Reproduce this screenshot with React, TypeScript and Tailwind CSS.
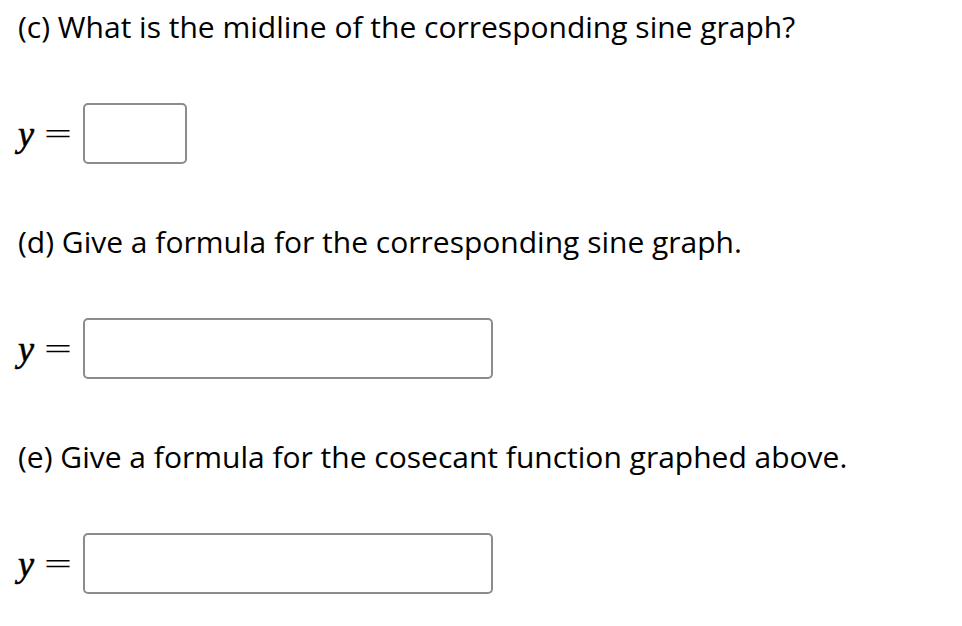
const questions = [
  { label: "(c) What is the midline of the corresponding sine graph?", boxWidth: "w-[104px]" },
  { label: "(d) Give a formula for the corresponding sine graph.", boxWidth: "w-[410px]" },
  { label: "(e) Give a formula for the cosecant function graphed above.", boxWidth: "w-[410px]" },
];

function Answer({ boxWidth }: { boxWidth: string }) {
  return (
    <div className="flex items-center">
      <span className="flex w-[65px] shrink-0 items-center font-['Liberation_Serif',serif] leading-none text-black">
        <span className="text-[36px] italic [-webkit-text-stroke:0.6px_black]">y</span>
        <span className="ml-[10px] inline-block origin-left scale-x-[1.65] text-[30px]">=</span>
      </span>
      <input
        type="text"
        className={`${boxWidth} h-[61px] rounded-[5px] border-2 border-[#8c8c8c] bg-white outline-none`}
      />
    </div>
  );
}

export default function App() {
  return (
    <div className="min-h-[626px] w-[962px] bg-white pl-[18px] font-['Open_Sans',sans-serif] text-black">
      {questions.map((q, i) => (
        <section key={i} className="flex h-[215px] flex-col pt-[7px]">
          <p className="text-[30px] leading-[40px]">{q.label}</p>
          <div className="mt-[56px]">
            <Answer boxWidth={q.boxWidth} />
          </div>
        </section>
      ))}
    </div>
  );
}
